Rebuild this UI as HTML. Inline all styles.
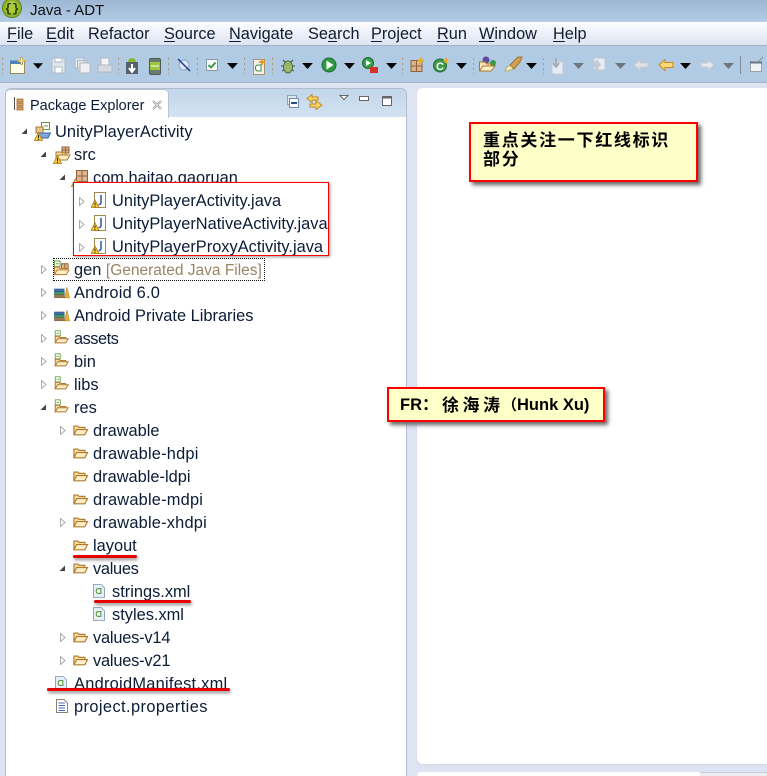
<!DOCTYPE html>
<html><head><meta charset="utf-8"><title>Java - ADT</title>
<style>
html,body{margin:0;padding:0}
body{width:767px;height:776px;overflow:hidden;position:relative;background:#dfe4f4;font-family:"Liberation Sans","Noto Sans CJK SC",sans-serif;color:#0a1a33}
.a{position:absolute}
.t{position:absolute;margin-top:1px;font-size:16.4px;line-height:20px;white-space:nowrap;color:#0c1c36}
.m{position:absolute;top:24px;font-size:16.3px;line-height:20px;color:#101c30;white-space:nowrap}
.m u{text-underline-offset:2px}
svg{position:absolute;overflow:visible}
.note{position:absolute;background:#ffffc8;border:2px solid #f00;box-shadow:3px 3px 4px #666;box-sizing:border-box;color:#000;font-weight:bold;font-size:15px;line-height:19px}
.note span{position:absolute;white-space:nowrap}
.ul{position:absolute;height:3px;background:#e60000;box-shadow:1px 2px 3px #888;border-radius:1.5px}
</style></head><body>
<svg width="0" height="0" style="position:absolute">
<defs>
<symbol id="open" viewBox="0 0 9 9"><path d="M7 1.5 7 7 1.5 7Z" fill="#444"/></symbol>
<symbol id="closed" viewBox="0 0 9 9"><path d="M2.5 .5 7 4.500 2.500 8.500Z" fill="#fff" stroke="#aaa"/></symbol>
<symbol id="folder" viewBox="0 0 18 16"><path d="M1.500 13.500V3.500H6l1.500 1.500H14V7.500" fill="#f8dc9c" stroke="#b07a30" stroke-width="1.300"/><path d="M1.500 13.500 4.500 7.500H17L14 13.500Z" fill="#fdeec8" stroke="#b07a30" stroke-width="1.300"/></symbol>
<symbol id="srcf" viewBox="0 0 18 18"><rect x="1.500" y="1" width="6" height="6" fill="#fff" stroke="#5e9a36"/><path d="M3 4h3" stroke="#5e9a36"/><path d="M1.500 15.500V7.500H6l1.500 1.500H14V11" fill="#f8dc9c" stroke="#b07a30" stroke-width="1.200"/><path d="M1.500 15.500 4.500 10.500H17L14 15.500Z" fill="#fdeec8" stroke="#b07a30" stroke-width="1.200"/></symbol>
<symbol id="java" viewBox="0 0 15 16"><path d="M3.500 .5H14.500V15.500H3.500Z" fill="#fff" stroke="#a08a50"/><path d="M10 3V10.500Q10 12.500 7.500 12.500" fill="none" stroke="#3a5fa8" stroke-width="1.600"/><path d="M4 8 8 15.500H0Z" fill="#fc3" stroke="#a8791a" stroke-width=".8"/><path d="M4 10.500v2.500M4 13.800v1.200" stroke="#222"/></symbol>
<symbol id="xml" viewBox="0 0 13 15"><path d="M.5 .5H9L12.500 4V14.500H.5Z" fill="#e7f0f8" stroke="#8aa0b8"/><path d="M8.500 5H5.500Q3.500 5 3.500 7.500T5.500 10H8.500ZM8.500 5V10" fill="#fff" stroke="#4f8f3a" stroke-width="1.100"/></symbol>
<symbol id="lib" viewBox="0 0 18 13"><rect x=".5" y="2.500" width="11" height="3" fill="#3d6fae" stroke="#2a4a78" stroke-width=".5"/><rect x=".5" y="5.500" width="11" height="3.500" fill="#3d9a62" stroke="#246" stroke-width=".5"/><rect x=".5" y="9" width="11" height="3.500" fill="#9a7a4a" stroke="#654" stroke-width=".5"/><path d="M12 12.500 14.500 .5 17.500 12.500Z" fill="#e8b53a" stroke="#a8791a" stroke-width=".6"/></symbol>
<symbol id="dd" viewBox="0 0 9 5"><path d="M0 0H9L4.500 5Z"/></symbol>
</defs></svg>

<!-- title -->
<div class="a" style="left:0;top:0;width:767px;height:22px;background:linear-gradient(#9db6d2,#b4cde6)"></div>
<svg style="left:2px;top:0" width="22" height="18" viewBox="0 0 22 18"><circle cx="10" cy="8" r="9.500" fill="#8fb52c" stroke="#5f8418"/><circle cx="10" cy="7" r="6" fill="#a8cc3c"/><text x="10" y="12" font-size="12" font-weight="bold" text-anchor="middle" fill="#26380c" font-family="Liberation Mono">{}</text></svg>
<div class="t" style="left:30px;top:0;color:#111;font-size:15px">Java - ADT</div>

<!-- menu -->
<div class="a" style="left:0;top:22px;width:767px;height:24px;background:linear-gradient(#fcfdfe,#dde3f2);border-bottom:1px solid #a9b3c4;box-sizing:border-box"></div>
<div class="m" style="left:7px"><u>F</u>ile</div>
<div class="m" style="left:46px"><u>E</u>dit</div>
<div class="m" style="left:88px">Refactor</div>
<div class="m" style="left:164px"><u>S</u>ource</div>
<div class="m" style="left:229px"><u>N</u>avigate</div>
<div class="m" style="left:308px">Se<u>a</u>rch</div>
<div class="m" style="left:371px"><u>P</u>roject</div>
<div class="m" style="left:437px"><u>R</u>un</div>
<div class="m" style="left:479px"><u>W</u>indow</div>
<div class="m" style="left:553px"><u>H</u>elp</div>

<!-- toolbar -->
<div class="a" style="left:0;top:46px;width:767px;height:37px;background:#b2cbe4;border-bottom:1px solid #a6b2c6;box-sizing:border-box"></div>
<svg style="left:0;top:46px" width="767" height="36" viewBox="0 46 767 36">
<g stroke="#b49a72" stroke-width="1" stroke-dasharray="2 3">
<path d="M2.500 58V74M118.500 58V74M168.500 58V74M197.500 58V74M244.500 58V74M272.500 58V74M402.500 58V74M473.500 58V74M543.500 58V74"/></g>
<path d="M740.500 56V74" stroke="#7d8a98"/>
<path d="M10.500 61.500H24.500V73.500H10.500Z" fill="#fffde8" stroke="#9a8a60"/><path d="M10 60.500H23V64H10Z" fill="#4f81bd"/><path d="M21.500 57V65M17.500 61H25.500" stroke="#c9961e" stroke-width="2"/><path d="M21.500 58V64M18.500 61H24.500" stroke="#fff5b0"/>
<path d="M52 58H65V73H52Z" fill="#dfe5ec" stroke="#b3b9c0"/><path d="M55 58H62V62H55ZM55 67H62V73H55Z" fill="#fff" stroke="#b3b9c0"/>
<path d="M75 58H84V68H75ZM77.500 60.500H86.500V70.500H77.500Z" fill="#e2e7ee" stroke="#b3b9c0"/><path d="M80 63H90V73H80Z" fill="#eef0f4" stroke="#b3b9c0"/>
<path d="M101 58H109V65H101Z" fill="#f2f4f6" stroke="#b3b9c0"/><path d="M98 65H112V72H98Z" fill="#d6dbe1" stroke="#b3b9c0"/>
<rect x="126" y="62" width="12" height="12" fill="#56606c"/><path d="M128 62a4 4 0 0 1 8 0Z" fill="#84ba2c"/><path d="M132 64V71M129 68L132 72 135 68" stroke="#fff" stroke-width="2" fill="none"/>
<rect x="149.500" y="58.500" width="11" height="16" rx="1.500" fill="#6a7a70" stroke="#4c5a54"/><rect x="150" y="62" width="10" height="8" fill="#9cc63c"/><path d="M151 66h8" stroke="#fff"/>
<circle cx="184" cy="65" r="5" fill="#dbe6f2" stroke="#8fa6c2"/><path d="M178 59 190 71" stroke="#1c3c8c" stroke-width="1.500"/>
<rect x="206.500" y="59.500" width="11" height="11" fill="#f6f8f6" stroke="#8a98a8"/><path d="M208.500 65 211 67.500 215.500 62.500" fill="none" stroke="#2a9a3a" stroke-width="1.800"/>
<path d="M253.500 59.500H264.500V74.500H253.500Z" fill="#f4f0e8" stroke="#a89070"/><path d="M262 59V65M259 62H265" stroke="#e89a20" stroke-width="2"/><path d="M261 65H258Q255.500 65 255.500 68T258 71H261Z" fill="#fff" stroke="#3a8a3a"/>
<path d="M283 60 286 63M293 60 290 63M281 66H295M282 71 285 69M294 71 291 69" stroke="#374b38"/><ellipse cx="288" cy="67" rx="4.500" ry="6" fill="#9bb86a" stroke="#4e6a3a"/>
<circle cx="329" cy="65" r="7" fill="#2f9a44" stroke="#1d6a30"/><path d="M326.500 60.500V69.500L333.500 65Z" fill="#fff"/>
<circle cx="368" cy="63" r="5.500" fill="#34a04a" stroke="#1d6a30"/><path d="M366 60V66L371 63Z" fill="#fff"/><rect x="370" y="67" width="8" height="6" fill="#d6302a"/>
<path d="M411 60.500H422V71.500H411Z" fill="#d8b38c" stroke="#96603a"/><path d="M416.500 60V72M411 66H422" stroke="#96603a"/><path d="M421 57.500V63.500M418 60.500H424" stroke="#e8b020" stroke-width="2"/>
<circle cx="440" cy="65.500" r="6.500" fill="#3c9a4a" stroke="#1f7034"/><text x="440" y="70" font-size="11" font-weight="bold" text-anchor="middle" fill="#fff" font-family="Liberation Sans">C</text><path d="M446 58V63M443.500 60.500H448.500" stroke="#e8b020" stroke-width="2"/>
<circle cx="486" cy="60" r="3.500" fill="#5a4aa0"/><circle cx="493" cy="63" r="3" fill="#3a9a4a"/><path d="M479.500 71V62H485L487 64H491V66" fill="#fbe6b4" stroke="#a87a30"/><path d="M479.500 71 483 66H495L491 71Z" fill="#fdeec8" stroke="#a87a30"/>
<path d="M510 65 518 57H522L520 62 514 69Z" fill="#d0a050" stroke="#a07030"/><path d="M505 71Q507 65 511 66L513 69Q510 71 505 71Z" fill="#f4f0c0" stroke="#b8a870"/>
<path d="M552 62H563V74H552Z" fill="#e6ecf4" stroke="#c2c8d0"/><path d="M556 58V66M553 63L556 67 559 63" stroke="#a8adb5" stroke-width="2" fill="none"/>
<path d="M594 58H605V70H594Z" fill="#e6ecf4" stroke="#c2c8d0"/><path d="M597 72V63M594 66L597 62 600 66" stroke="#c4c9d0" stroke-width="3" fill="none"/>
<path d="M634 65 640 60V63H648V67H640V70Z" fill="#dde2e8" stroke="#c6cbd2"/>
<path d="M659 65 665 59.500V62.500H673V67.500H665V70.500Z" fill="#fcd878" stroke="#c48a1c"/>
<path d="M714 65 708 60V63H701V67H708V70Z" fill="#e6eaef" stroke="#c6cbd2"/>
<rect x="750.500" y="62.500" width="11" height="9" fill="#f0f2f4" stroke="#9aa4ae"/><path d="M750 62.500H762" stroke="#6a7480" stroke-width="2"/><path d="M758 62 763 57" stroke="#8a929a"/>
</svg>
<svg style="left:33px;top:63px" width="10" height="6"><use href="#dd" width="10" height="6" fill="#000"/></svg>
<svg style="left:227px;top:63px" width="11" height="6"><use href="#dd" width="11" height="6" fill="#000"/></svg>
<svg style="left:302px;top:63px" width="11" height="6"><use href="#dd" width="11" height="6" fill="#000"/></svg>
<svg style="left:344px;top:63px" width="11" height="6"><use href="#dd" width="11" height="6" fill="#000"/></svg>
<svg style="left:386px;top:63px" width="11" height="6"><use href="#dd" width="11" height="6" fill="#000"/></svg>
<svg style="left:456px;top:63px" width="11" height="6"><use href="#dd" width="11" height="6" fill="#000"/></svg>
<svg style="left:526px;top:63px" width="11" height="6"><use href="#dd" width="11" height="6" fill="#000"/></svg>
<svg style="left:573px;top:63px" width="11" height="6"><use href="#dd" width="11" height="6" fill="#6e7680"/></svg>
<svg style="left:615px;top:63px" width="11" height="6"><use href="#dd" width="11" height="6" fill="#6e7680"/></svg>
<svg style="left:680px;top:63px" width="11" height="6"><use href="#dd" width="11" height="6" fill="#000"/></svg>
<svg style="left:723px;top:63px" width="11" height="6"><use href="#dd" width="11" height="6" fill="#6e7680"/></svg>

<!-- left view -->
<div class="a" style="left:5px;top:88px;width:402px;height:688px;background:#fff;border:1px solid #b4bccc;border-bottom:0;border-radius:6px 6px 0 0;box-sizing:border-box"></div>
<div class="a" style="left:6px;top:89px;width:400px;height:28px;background:linear-gradient(#c2d6ea,#d2e2f1);border-radius:5px 5px 0 0"></div>
<div class="a" style="left:6px;top:89px;width:163px;height:29px;background:#fff;border:1px solid #b8c2d2;border-bottom:0;border-left:0;border-radius:5px 5px 0 0;box-sizing:border-box"></div>
<svg style="left:14px;top:97px" width="10" height="14"><path d="M.5 0V13" stroke="#555"/><path d="M3 2h6v3H3zM3 6h6v3H3zM3 10h6v3H3z" fill="#d9a066" stroke="#a06a2c" stroke-width=".8"/></svg>
<div class="t" style="left:30px;top:95px;font-size:14.5px">Package Explorer</div>
<svg style="left:152px;top:100px" width="10" height="10"><path d="M1 1 9 9M9 1 1 9" stroke="#8c8c8c" stroke-width="2"/><path d="M1 1 9 9M9 1 1 9" stroke="#fff" stroke-width=".7"/></svg>
<svg style="left:286px;top:94px" width="115" height="18" viewBox="286 94 115 18">
<rect x="287.500" y="95.500" width="9" height="9" fill="#dfe9f3" stroke="#8da2b7"/><rect x="289.500" y="98.500" width="9" height="9" fill="#fff" stroke="#6f8aa5"/><path d="M291 103H297" stroke="#23507f" stroke-width="2"/>
<path d="M307 98.500 312 94.500V97H318V100H312V102.500Z" fill="#fad56c" stroke="#c38a1c"/><path d="M322 105 316 101V104H310V107H316V109.500Z" fill="#fad56c" stroke="#c38a1c"/>
<path d="M340 95.500H348L344 99.500Z" fill="#fff" stroke="#666"/>
<rect x="359.500" y="96.500" width="9" height="4" fill="#fff" stroke="#666"/>
<rect x="382.500" y="96.500" width="9" height="9" fill="#fff" stroke="#666"/><path d="M382 97.500H392" stroke="#666" stroke-width="2"/>
</svg>

<!-- right view -->
<div class="a" style="left:417px;top:88px;width:350px;height:676px;background:#fff;border-radius:6px 0 0 6px;box-shadow:0 1px 2px #cfd5e6"></div>
<div class="a" style="left:417px;top:772px;width:350px;height:4px;background:#fff;border-radius:6px 0 0 0"></div>
<div class="a" style="left:700px;top:772px;width:67px;height:4px;background:#eceef2;border-top:1px solid #c8ccd6;box-sizing:border-box"></div>

<!-- package row drawn below the red box -->
<svg style="left:72px;top:169px" width="18" height="18" viewBox="0 0 18 18"><path d="M4.500 1.500H15.500V12.500H4.500Z" fill="#dcb896" stroke="#96603a"/><path d="M10 1V13M4 7H16" stroke="#96603a"/><path d="M3.500 9.500 7.500 17.500H-.5Z" fill="#fc3" stroke="#a8791a" stroke-width=".8"/></svg>
<div class="t" style="left:93px;top:167px">com.haitao.gaoruan</div>
<div class="a" style="left:73px;top:182px;width:256px;height:74px;background:#fff;border:1px solid #f00;box-sizing:border-box;box-shadow:1px 1px 3px #999"></div>

<!-- tree arrows -->
<svg style="left:20px;top:127px" width="9" height="9"><use href="#open" width="9" height="9"/></svg>
<svg style="left:39px;top:150px" width="9" height="9"><use href="#open" width="9" height="9"/></svg>
<svg style="left:58px;top:173px" width="9" height="9"><use href="#open" width="9" height="9"/></svg>
<svg style="left:77px;top:197px" width="9" height="9"><use href="#closed" width="9" height="9"/></svg>
<svg style="left:77px;top:220px" width="9" height="9"><use href="#closed" width="9" height="9"/></svg>
<svg style="left:77px;top:243px" width="9" height="9"><use href="#closed" width="9" height="9"/></svg>
<svg style="left:39px;top:265px" width="9" height="9"><use href="#closed" width="9" height="9"/></svg>
<svg style="left:39px;top:288px" width="9" height="9"><use href="#closed" width="9" height="9"/></svg>
<svg style="left:39px;top:311px" width="9" height="9"><use href="#closed" width="9" height="9"/></svg>
<svg style="left:39px;top:334px" width="9" height="9"><use href="#closed" width="9" height="9"/></svg>
<svg style="left:39px;top:357px" width="9" height="9"><use href="#closed" width="9" height="9"/></svg>
<svg style="left:39px;top:380px" width="9" height="9"><use href="#closed" width="9" height="9"/></svg>
<svg style="left:39px;top:403px" width="9" height="9"><use href="#open" width="9" height="9"/></svg>
<svg style="left:58px;top:426px" width="9" height="9"><use href="#closed" width="9" height="9"/></svg>
<svg style="left:58px;top:518px" width="9" height="9"><use href="#closed" width="9" height="9"/></svg>
<svg style="left:58px;top:564px" width="9" height="9"><use href="#open" width="9" height="9"/></svg>
<svg style="left:58px;top:633px" width="9" height="9"><use href="#closed" width="9" height="9"/></svg>
<svg style="left:58px;top:656px" width="9" height="9"><use href="#closed" width="9" height="9"/></svg>

<!-- tree icons -->
<svg style="left:34px;top:122px" width="18" height="19" viewBox="0 0 18 19"><rect x="7.500" y=".5" width="8" height="7" fill="#fff" stroke="#5e9a36"/><path d="M10 4h4" stroke="#5e9a36"/><path d="M2 5H9V11H2Z" fill="#e6c48c" stroke="#a87a30"/><path d="M4 11H16.500L14 16H6Z" fill="#7ea6d8" stroke="#3d6aa8"/><path d="M4.500 10.500 8.500 18.500H.5Z" fill="#fc3" stroke="#a8791a" stroke-width=".8"/><path d="M4.500 13v3M4.500 16.800v1.200" stroke="#222"/></svg>
<svg style="left:53px;top:146px" width="18" height="18" viewBox="0 0 18 18"><path d="M9 1H16V7H9Z" fill="#dfb388" stroke="#96603a"/><path d="M12.500 1V7M9 4H16" stroke="#96603a"/><path d="M3 13V6H8L9 7H13V9" fill="#f8dc9c" stroke="#b07a30"/><path d="M3 13 6 9H17L14 14H6Z" fill="#fdeec8" stroke="#b07a30"/><path d="M4.500 9.500 8.500 17.500H.5Z" fill="#fc3" stroke="#a8791a" stroke-width=".8"/><path d="M4.500 12v3M4.500 15.800v1.200" stroke="#222"/></svg>
<svg style="left:91px;top:192px" width="15" height="16"><use href="#java" width="15" height="16"/></svg>
<svg style="left:91px;top:215px" width="15" height="16"><use href="#java" width="15" height="16"/></svg>
<svg style="left:91px;top:238px" width="15" height="16"><use href="#java" width="15" height="16"/></svg>
<svg style="left:53px;top:260px" width="17" height="17" viewBox="0 0 18 18"><rect x="1.500" y="1" width="6" height="6" fill="#fff" stroke="#5e9a36"/><path d="M3 4h3" stroke="#5e9a36"/><path d="M9 4H16V9H9Z" fill="#dfb388" stroke="#96603a"/><path d="M12.500 4V9" stroke="#96603a"/><path d="M1.500 15.500V7.500H6l1.500 1.500H14V11" fill="#f8dc9c" stroke="#b07a30"/><path d="M1.500 15.500 4.500 10.500H17L14 15.500Z" fill="#fdeec8" stroke="#b07a30"/></svg>
<svg style="left:54px;top:286px" width="16" height="13"><use href="#lib" width="16" height="13"/></svg>
<svg style="left:54px;top:309px" width="16" height="13"><use href="#lib" width="16" height="13"/></svg>
<svg style="left:53px;top:330px" width="17" height="15"><use href="#srcf" width="17" height="15"/></svg>
<svg style="left:53px;top:353px" width="17" height="15"><use href="#srcf" width="17" height="15"/></svg>
<svg style="left:53px;top:376px" width="17" height="15"><use href="#srcf" width="17" height="15"/></svg>
<svg style="left:53px;top:399px" width="17" height="15"><use href="#srcf" width="17" height="15"/></svg>
<svg style="left:72px;top:423px" width="17" height="14"><use href="#folder" width="17" height="14"/></svg>
<svg style="left:72px;top:446px" width="17" height="14"><use href="#folder" width="17" height="14"/></svg>
<svg style="left:72px;top:469px" width="17" height="14"><use href="#folder" width="17" height="14"/></svg>
<svg style="left:72px;top:492px" width="17" height="14"><use href="#folder" width="17" height="14"/></svg>
<svg style="left:72px;top:515px" width="17" height="14"><use href="#folder" width="17" height="14"/></svg>
<svg style="left:72px;top:538px" width="17" height="14"><use href="#folder" width="17" height="14"/></svg>
<svg style="left:72px;top:561px" width="17" height="14"><use href="#folder" width="17" height="14"/></svg>
<svg style="left:93px;top:584px" width="12" height="14"><use href="#xml" width="12" height="14"/></svg>
<svg style="left:93px;top:607px" width="12" height="14"><use href="#xml" width="12" height="14"/></svg>
<svg style="left:72px;top:630px" width="17" height="14"><use href="#folder" width="17" height="14"/></svg>
<svg style="left:72px;top:653px" width="17" height="14"><use href="#folder" width="17" height="14"/></svg>
<svg style="left:55px;top:676px" width="12" height="14"><use href="#xml" width="12" height="14"/></svg>
<svg style="left:56px;top:699px" width="12" height="14" viewBox="0 0 12 14"><path d="M.5 .5H8L11.500 4V13.500H.5Z" fill="#fff" stroke="#8a8070"/><path d="M2.500 4H9M2.500 6.500H9M2.500 9H9M2.500 11.500H9" stroke="#4a6aa8"/></svg>

<!-- tree labels -->
<div class="t" style="left:55px;top:121px;letter-spacing:.1px">UnityPlayerActivity</div>
<div class="t" style="left:74px;top:144px">src</div>
<div class="t" style="left:112px;top:190px">UnityPlayerActivity.java</div>
<div class="t" style="left:112px;top:213px">UnityPlayerNativeActivity.java</div>
<div class="t" style="left:112px;top:236px">UnityPlayerProxyActivity.java</div>
<div class="t" style="left:74px;top:259px">gen <span style="color:#9a8464;font-size:15.5px">[Generated Java Files]</span></div>
<div class="t" style="left:74px;top:282px;letter-spacing:.2px">Android 6.0</div>
<div class="t" style="left:74px;top:305px">Android Private Libraries</div>
<div class="t" style="left:74px;top:328px;letter-spacing:-.5px">assets</div>
<div class="t" style="left:74px;top:351px">bin</div>
<div class="t" style="left:74px;top:374px">libs</div>
<div class="t" style="left:74px;top:397px">res</div>
<div class="t" style="left:93px;top:420px">drawable</div>
<div class="t" style="left:93px;top:443px;letter-spacing:.2px">drawable-hdpi</div>
<div class="t" style="left:93px;top:466px">drawable-ldpi</div>
<div class="t" style="left:93px;top:489px;letter-spacing:.2px">drawable-mdpi</div>
<div class="t" style="left:93px;top:512px;letter-spacing:.2px">drawable-xhdpi</div>
<div class="t" style="left:93px;top:535px">layout</div>
<div class="t" style="left:93px;top:558px;letter-spacing:-.3px">values</div>
<div class="t" style="left:112px;top:581px">strings.xml</div>
<div class="t" style="left:112px;top:604px">styles.xml</div>
<div class="t" style="left:93px;top:627px;letter-spacing:-.2px">values-v14</div>
<div class="t" style="left:93px;top:650px;letter-spacing:-.2px">values-v21</div>
<div class="t" style="left:74px;top:673px;letter-spacing:.26px">AndroidManifest.xml</div>
<div class="t" style="left:74px;top:696px;letter-spacing:.4px">project.properties</div>

<!-- focus rect -->
<div class="a" style="left:53px;top:258px;width:212px;height:23px;border:1px dotted #111;box-sizing:border-box"></div>

<!-- annotations -->
<div class="ul" style="left:73px;top:555px;width:64px"></div>
<div class="ul" style="left:94px;top:600px;width:97px"></div>
<div class="ul" style="left:47px;top:688px;width:183px"></div>
<div class="note" style="left:469px;top:122px;width:229px;height:60px;padding:7px 0 0 12px;font-size:17px;letter-spacing:1.7px">重点关注一下红线标识<br>部分</div>
<div class="note" style="left:387px;top:387px;width:218px;height:35px;font-size:16.5px">
<span style="left:11px;top:7px">FR：</span><span style="left:53px;top:7px;letter-spacing:3.5px;font-size:17px">徐海涛</span><span style="left:113px;top:7px;font-size:15px">（</span><span style="left:128px;top:7px">Hunk Xu)</span></div>
</body></html>
